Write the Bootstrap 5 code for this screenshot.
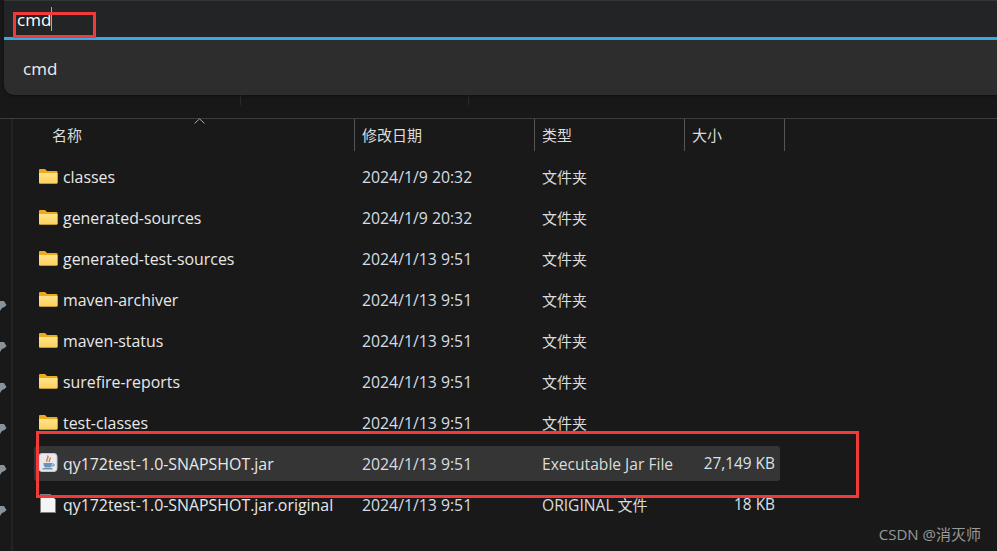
<!doctype html>
<html lang="zh"><head><meta charset="utf-8"><title>Explorer</title>
<link href="https://cdn.jsdelivr.net/npm/bootstrap@5.3.0/dist/css/bootstrap.min.css" rel="stylesheet">
<style>
html,body{height:100%}
body{background:#191919;color:#e8e8e8;font:15.9px/20px "Open Sans","Noto Sans CJK SC",sans-serif;overflow:hidden;width:997px;height:551px;position:relative}
.strip{height:119px;background:#181818;border-bottom:1px solid #3d3d3d}
.tick{position:absolute;top:95px;width:1px;height:10px;background:#2a2a2a}
.rail{position:absolute;left:11px;top:119px;bottom:0;width:2px;background:#232323}
.pin{position:absolute;left:0;width:7px;height:13px}
.head{height:32px}
.hc{height:32px;border-right:1px solid #555;padding:6px 0 0 7px;color:#dcdcdc;font-size:15px;flex:none}
.h1c{width:355px;padding-left:52px;position:relative}
.h2c{width:180px}.h3c{width:150px}.h4c{width:100px}
.sort{position:absolute;left:194px;top:-1px}
.rows{padding-top:5px}
.frow{height:41px;padding:11px 0 0 0;position:relative}
.fn{width:362px;padding-left:63px;flex:none;white-space:nowrap}
.fd{width:180px;flex:none;color:#d6dde2;font-size:15.8px}
.ft{width:146px;flex:none;white-space:nowrap;font-size:15.6px;color:#dcdcdc}
.zh-t{font-size:15px}
.fs{width:87px;flex:none;text-align:right;white-space:nowrap;color:#d6e2ea;font-size:15.4px}
.ico{position:absolute;left:38px;top:11px}
.ico-f{top:10px}
.sel{position:absolute;left:34px;top:446px;width:746px;height:35px;background:#353535;border-radius:3px}
.box{position:absolute;border:3px solid #f23a3a;pointer-events:none}
.box1{left:13px;top:12px;width:83px;height:26px}
.box2{left:36px;top:431px;width:823px;height:67px}
.search{position:absolute;left:4px;top:0;right:0;height:95px;background:#2d2d2d;border-radius:0 0 0 10px;box-shadow:0 1px 3px #0006;overflow:hidden}
.inp{height:37px;background:#232426;border-top:1px solid #34373a;padding:9px 0 0 13px;font-size:17px;color:#fff;display:flex;align-items:flex-start}
.caret{width:1px;height:24px;background:#aaa;margin-top:-3px}
.acc{height:3px;background:#36a9e6}
.sug{padding:19px 0 0 19px;font-size:17px;color:#eee}
.mark-w{position:absolute;right:16px;top:524px;color:#9a9a9a;font-size:15px;line-height:20px}
</style></head><body>
<div class="strip"></div>
<div class="tick" style="left:240px"></div><div class="tick" style="left:468px"></div>
<div class="rail"></div>
<div class="d-flex head">
<div class="hc h1c">名称<svg class="sort" width="11" height="6" viewBox="0 0 11 6"><path d="M.5 5.500 5.500.8l5 4.700" fill="none" stroke="#aaa"/></svg></div>
<div class="hc h2c">修改日期</div><div class="hc h3c">类型</div><div class="hc h4c">大小</div>
</div>
<div class="sel"></div>
<div class="rows">
<div class="frow d-flex"><svg class="ico" width="20" height="18"><use href="#fold"/></svg><div class="fn">classes</div><div class="fd">2024/1/9 20:32</div><div class="ft zh-t">文件夹</div></div>
<div class="frow d-flex"><svg class="ico" width="20" height="18"><use href="#fold"/></svg><div class="fn">generated-sources</div><div class="fd">2024/1/9 20:32</div><div class="ft zh-t">文件夹</div></div>
<div class="frow d-flex"><svg class="ico" width="20" height="18"><use href="#fold"/></svg><div class="fn">generated-test-sources</div><div class="fd">2024/1/13 9:51</div><div class="ft zh-t">文件夹</div></div>
<div class="frow d-flex"><svg class="ico" width="20" height="18"><use href="#fold"/></svg><div class="fn">maven-archiver</div><div class="fd">2024/1/13 9:51</div><div class="ft zh-t">文件夹</div></div>
<div class="frow d-flex"><svg class="ico" width="20" height="18"><use href="#fold"/></svg><div class="fn">maven-status</div><div class="fd">2024/1/13 9:51</div><div class="ft zh-t">文件夹</div></div>
<div class="frow d-flex"><svg class="ico" width="20" height="18"><use href="#fold"/></svg><div class="fn">surefire-reports</div><div class="fd">2024/1/13 9:51</div><div class="ft zh-t">文件夹</div></div>
<div class="frow d-flex"><svg class="ico" width="20" height="18"><use href="#fold"/></svg><div class="fn">test-classes</div><div class="fd">2024/1/13 9:51</div><div class="ft zh-t">文件夹</div></div>
<div class="frow d-flex"><svg class="ico ico-f" width="20" height="20" viewBox="0 0 20 20"><rect x="1" y=".5" width="18" height="18" rx="3" fill="#e6eaf0" stroke="#c4c8cc"/><path d="M9.500 2.500c2.500 2.500-2.500 3.500-.5 6.500M12 4.500c1 1.500-1.500 2-.5 4.500" fill="none" stroke="#d9772a" stroke-width="1.4"/><path d="M5.500 10h8.500c0 2-.5 3.500-1.500 4.500h-5.500c-1-1-1.500-2.500-1.500-4.500z" fill="#6d92b5"/><path d="M14 11h2v2h-2.500" fill="none" stroke="#6d92b5"/><path d="M4.500 15.800h10" stroke="#5a7fa3" stroke-width="1.2"/></svg><div class="fn">qy172test-1.0-SNAPSHOT.jar</div><div class="fd">2024/1/13 9:51</div><div class="ft">Executable Jar File</div><div class="fs">27,149 KB</div></div>
<div class="frow d-flex"><svg class="ico ico-f" width="20" height="20" viewBox="0 0 20 20"><path d="M2.500.5h10l5 5v13h-15z" fill="#f5f5f5" stroke="#808080"/></svg><div class="fn">qy172test-1.0-SNAPSHOT.jar.original</div><div class="fd">2024/1/13 9:51</div><div class="ft"><span>ORIGINAL</span> <span class="zh-t">文件</span></div><div class="fs">18 KB</div></div>
</div>
<svg class="pin" style="top:300px" viewBox="0 0 7 13"><path d="M0 1h4l2.500 4-2 2-2.500 1-2 3z" fill="#8a9299"/></svg>
<svg class="pin" style="top:341px" viewBox="0 0 7 13"><path d="M0 1h4l2.500 4-2 2-2.500 1-2 3z" fill="#8a9299"/></svg>
<svg class="pin" style="top:382px" viewBox="0 0 7 13"><path d="M0 1h4l2.500 4-2 2-2.500 1-2 3z" fill="#8a9299"/></svg>
<svg class="pin" style="top:423px" viewBox="0 0 7 13"><path d="M0 1h4l2.500 4-2 2-2.500 1-2 3z" fill="#8a9299"/></svg>
<svg class="pin" style="top:464px" viewBox="0 0 7 13"><path d="M0 1h4l2.500 4-2 2-2.500 1-2 3z" fill="#8a9299"/></svg>
<svg class="pin" style="top:505px" viewBox="0 0 7 13"><path d="M0 1h4l2.500 4-2 2-2.500 1-2 3z" fill="#8a9299"/></svg>
<div class="search"><div class="inp">cmd<span class="caret"></span></div><div class="acc"></div><div class="sug">cmd</div></div>
<div class="box box1"></div><div class="box box2"></div>
<div class="mark-w">CSDN @消灭师</div>
<svg width="0" height="0" class="position-absolute"><defs>
<linearGradient id="fg" x1="0" y1="0" x2="0" y2="1"><stop offset="0" stop-color="#ffe38a"/><stop offset="1" stop-color="#fdd05c"/></linearGradient>
<symbol id="fold" viewBox="0 0 20 18"><path d="M1 3a1 1 0 0 1 1-1h5l2 2h9.500a1 1 0 0 1 1 1V15.500a1 1 0 0 1-1 1H2a1 1 0 0 1-1-1z" fill="#eeaa1d"/><path d="M1 6h18.500v9.800a.8.8 0 0 1-.8.8H1.800a.8.8 0 0 1-.8-.8z" fill="url(#fg)"/></symbol>
</defs></svg>
</body></html>
